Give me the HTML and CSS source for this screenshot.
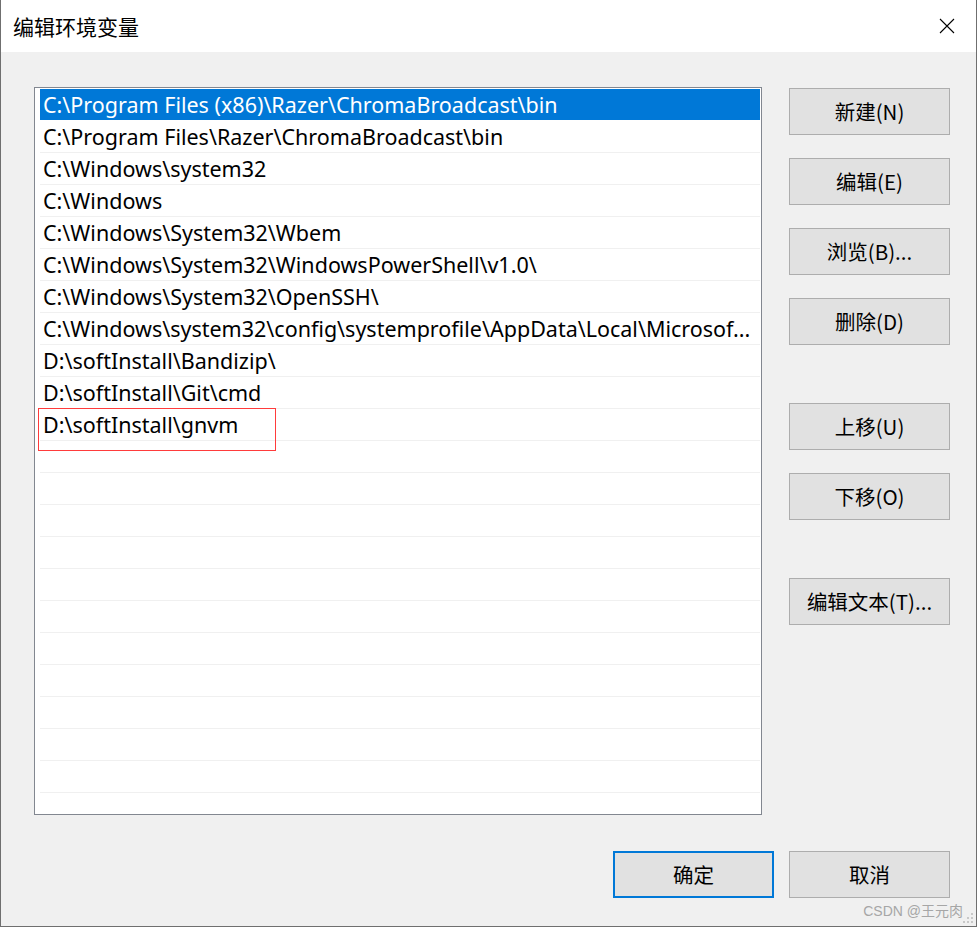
FILE: index.html
```html
<!DOCTYPE html>
<html lang="zh-CN">
<head>
<meta charset="utf-8">
<title>编辑环境变量</title>
<link rel="stylesheet" href="styles.css">
</head>
<body>
<div class="window">
  <div class="titlebar">
    <span class="title">编辑环境变量</span>
    <svg class="close" width="16" height="16" viewBox="0 0 16 16"><path d="M1 1L15 15M15 1L1 15" stroke="#000" stroke-width="1.1" fill="none"/></svg>
  </div>
  <div class="main">
    <div class="listbox">
      <div class="row selected">C:\Program Files (x86)\Razer\ChromaBroadcast\bin</div>
      <div class="row">C:\Program Files\Razer\ChromaBroadcast\bin</div>
      <div class="row">C:\Windows\system32</div>
      <div class="row">C:\Windows</div>
      <div class="row">C:\Windows\System32\Wbem</div>
      <div class="row">C:\Windows\System32\WindowsPowerShell\v1.0\</div>
      <div class="row">C:\Windows\System32\OpenSSH\</div>
      <div class="row">C:\Windows\system32\config\systemprofile\AppData\Local\Microsof...</div>
      <div class="row">D:\softInstall\Bandizip\</div>
      <div class="row">D:\softInstall\Git\cmd</div>
      <div class="row">D:\softInstall\gnvm</div>
      <div class="row"></div>
      <div class="row"></div>
      <div class="row"></div>
      <div class="row"></div>
      <div class="row"></div>
      <div class="row"></div>
      <div class="row"></div>
      <div class="row"></div>
      <div class="row"></div>
      <div class="row"></div>
      <div class="row"></div>
      <div class="highlight"></div>
    </div>
    <div class="side">
      <button class="btn">新建(N)</button>
      <button class="btn">编辑(E)</button>
      <button class="btn">浏览(B)...</button>
      <button class="btn">删除(D)</button>
      <button class="btn group">上移(U)</button>
      <button class="btn">下移(O)</button>
      <button class="btn group">编辑文本(T)...</button>
    </div>
  </div>
  <div class="footer">
    <button class="btn default">确定</button>
    <button class="btn">取消</button>
  </div>
  <div class="watermark">CSDN @王元肉</div>
  <svg class="grip" width="14" height="14" viewBox="0 0 14 14">
    <rect x="10" y="2" width="2" height="2" fill="#c8c8c8"/>
    <rect x="6" y="6" width="2" height="2" fill="#c8c8c8"/>
    <rect x="10" y="6" width="2" height="2" fill="#c8c8c8"/>
    <rect x="2" y="10" width="2" height="2" fill="#c8c8c8"/>
    <rect x="6" y="10" width="2" height="2" fill="#c8c8c8"/>
    <rect x="10" y="10" width="2" height="2" fill="#c8c8c8"/>
  </svg>
</div>
</body>
</html>
```
FILE: styles.css
```css
html, body {
  margin: 0;
  padding: 0;
  background: #ffffff;
}
body {
  font-family: "Noto Sans", "Noto Sans CJK SC", sans-serif;
  color: #000;
}
.window {
  position: relative;
  width: 977px;
  height: 927px;
  box-sizing: border-box;
  border-left: 1px solid #6f6f6f;
  border-right: 1px solid #6f6f6f;
  border-bottom: 1px solid #6f6f6f;
  background: #f0f0f0;
  display: flex;
  flex-direction: column;
  overflow: hidden;
}
.titlebar {
  height: 52px;
  flex: none;
  background: #ffffff;
  display: flex;
  align-items: center;
  justify-content: space-between;
  padding: 0 21px 0 12px;
}
.title {
  font-family: "Noto Sans CJK SC", sans-serif;
  font-size: 21px;
  line-height: 1;
  margin-top: 1px;
}
.close {
  display: block;
}
.main {
  display: flex;
  gap: 27px;
  padding: 35px 0 0 33px;
}
.listbox {
  position: relative;
  width: 728px;
  height: 728px;
  box-sizing: border-box;
  border: 1px solid #828790;
  background: #ffffff;
  padding: 1px 1px 0 5px;
  overflow: hidden;
  flex: none;
}
.row {
  height: 31px;
  border-bottom: 1px solid #f0f0f0;
  font-size: 21.5px;
  line-height: 31px;
  padding-left: 3px;
  white-space: nowrap;
  overflow: hidden;
}
.row.selected {
  background: #0078d7;
  color: #ffffff;
  border-bottom-color: #ffffff;
}
.highlight {
  position: absolute;
  left: 3px;
  top: 320px;
  width: 236px;
  height: 41px;
  border: 1px solid #ff3b3b;
}
.side {
  display: flex;
  flex-direction: column;
  gap: 23px;
  padding-top: 1px;
}
.btn {
  width: 161px;
  height: 47px;
  box-sizing: border-box;
  border: 1px solid #adadad;
  background: #e1e1e1;
  font-family: "Noto Sans CJK SC", sans-serif;
  font-size: 20.5px;
  color: #000;
  padding: 0;
  margin: 0;
  line-height: 1;
}
.btn.group {
  margin-top: 35px;
}
.footer {
  display: flex;
  justify-content: flex-end;
  gap: 15px;
  padding: 36px 26px 0 0;
}
.btn.default {
  border: 2px solid #0078d7;
}
.watermark {
  position: absolute;
  right: 13px;
  bottom: 6px;
  font-family: "Liberation Sans", "Noto Sans CJK SC", sans-serif;
  font-size: 14px;
  color: #a6a6a6;
}
.grip {
  position: absolute;
  right: 1px;
  bottom: 1px;
}
```
